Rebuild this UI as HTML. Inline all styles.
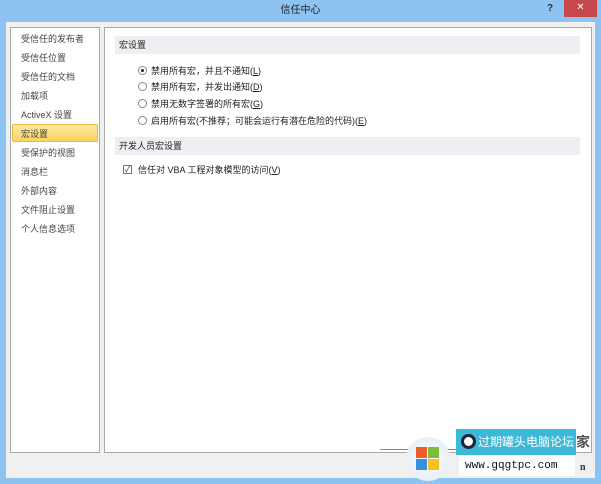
<!DOCTYPE html><html><head><meta charset="utf-8"><style>
*{margin:0;padding:0;box-sizing:border-box}
body{width:601px;height:484px;overflow:hidden;background:#8cc3f0;font-family:"Liberation Sans","Noto Sans CJK SC",sans-serif;font-size:9px;color:#333;position:relative}
.a{position:absolute}
.title{left:0;top:0;width:601px;height:22px;text-align:center;line-height:22px;font-size:10px;color:#222}
.body{left:6px;top:22px;width:589px;height:456px;background:#f0f0f0}
.lp{left:10px;top:27px;width:90px;height:426px;background:#fff;border:1px solid #a8a8a8}
.rp{left:104px;top:27px;width:488px;height:426px;background:#fff;border:1px solid #a8a8a8}
.li{left:21px;font-size:9px;color:#444}
.sel{left:12px;top:124px;width:86px;height:18px;background:linear-gradient(#fde9a1,#fbd460);border:1px solid #e5b84a;border-radius:2px}
.hd{left:115px;width:465px;height:18px;background:#eeeff2;line-height:18px;padding-left:4px;font-size:9px;color:#222}
.r{left:138px;width:9px;height:9px;border:1px solid #888;border-radius:50%;background:#fff}
.t{left:151px;font-size:9px;color:#222}
</style></head><body>
<div class="a title">信任中心</div>
<div class="a" style="left:547px;top:3px;font-weight:bold;font-size:10px">?</div>
<div class="a" style="left:564px;top:0;width:33px;height:17px;background:#c8474a;color:#fff;text-align:center;line-height:16px;font-size:10px">✕</div>
<div class="a body"></div>
<div class="a lp"></div>
<div class="a rp"></div>
<div class="a sel"></div>
<div class="a li" style="top:32px">受信任的发布者</div>
<div class="a li" style="top:51px">受信任位置</div>
<div class="a li" style="top:70px">受信任的文档</div>
<div class="a li" style="top:89px">加载项</div>
<div class="a li" style="top:108px">ActiveX 设置</div>
<div class="a li" style="top:127px">宏设置</div>
<div class="a li" style="top:146px">受保护的视图</div>
<div class="a li" style="top:165px">消息栏</div>
<div class="a li" style="top:184px">外部内容</div>
<div class="a li" style="top:203px">文件阻止设置</div>
<div class="a li" style="top:222px">个人信息选项</div>
<div class="a hd" style="top:36px">宏设置</div>
<div class="a r" style="top:66px"><div class="a" style="left:2px;top:2px;width:3px;height:3px;border-radius:50%;background:#222"></div></div>
<div class="a t" style="top:64px">禁用所有宏，并且不通知(<u>L</u>)</div>
<div class="a r" style="top:82px"></div>
<div class="a t" style="top:80px">禁用所有宏，并发出通知(<u>D</u>)</div>
<div class="a r" style="top:99px"></div>
<div class="a t" style="top:97px">禁用无数字签署的所有宏(<u>G</u>)</div>
<div class="a r" style="top:116px"></div>
<div class="a t" style="top:114px">启用所有宏(不推荐；可能会运行有潜在危险的代码)(<u>E</u>)</div>
<div class="a hd" style="top:137px">开发人员宏设置</div>
<div class="a" style="left:123px;top:165px;width:9px;height:9px;border:1px solid #777;background:#fff;font-size:8px;line-height:7px;text-align:center">✓</div>
<div class="a t" style="left:138px;top:163px">信任对 VBA 工程对象模型的访问(<u>V</u>)</div>
<div class="a" style="left:380px;top:449px;width:80px;height:1px;background:#888"></div>
<div class="a" style="left:406px;top:437px;width:44px;height:44px;border-radius:50%;background:radial-gradient(#fff,#dde8f2)"></div>
<div class="a" style="left:416px;top:447px;width:11px;height:11px;background:#f25a2a"></div>
<div class="a" style="left:428px;top:447px;width:11px;height:11px;background:#7dbb3a"></div>
<div class="a" style="left:416px;top:459px;width:11px;height:11px;background:#3a8ee0"></div>
<div class="a" style="left:428px;top:459px;width:11px;height:11px;background:#f8c020"></div>
<div class="a" style="left:456px;top:429px;width:120px;height:26px;background:#3cb9d8;color:#fff;font-size:12px;line-height:26px;padding-left:22px">过期罐头电脑论坛</div>
<div class="a" style="left:461px;top:434px;width:15px;height:15px;border-radius:50%;border:3px solid #223;background:#fff"></div>
<div class="a" style="left:576px;top:432px;font-size:14px;font-weight:bold;color:#555">家</div>
<div class="a" style="left:459px;top:456px;width:116px;height:20px;background:#fff;font-family:'Liberation Mono',monospace;font-size:11px;line-height:20px;padding-left:6px;color:#111">www.gqgtpc.com</div>
<div class="a" style="left:580px;top:462px;font-size:10px;font-weight:bold;font-family:'Liberation Serif',serif">n</div>
</body></html>
